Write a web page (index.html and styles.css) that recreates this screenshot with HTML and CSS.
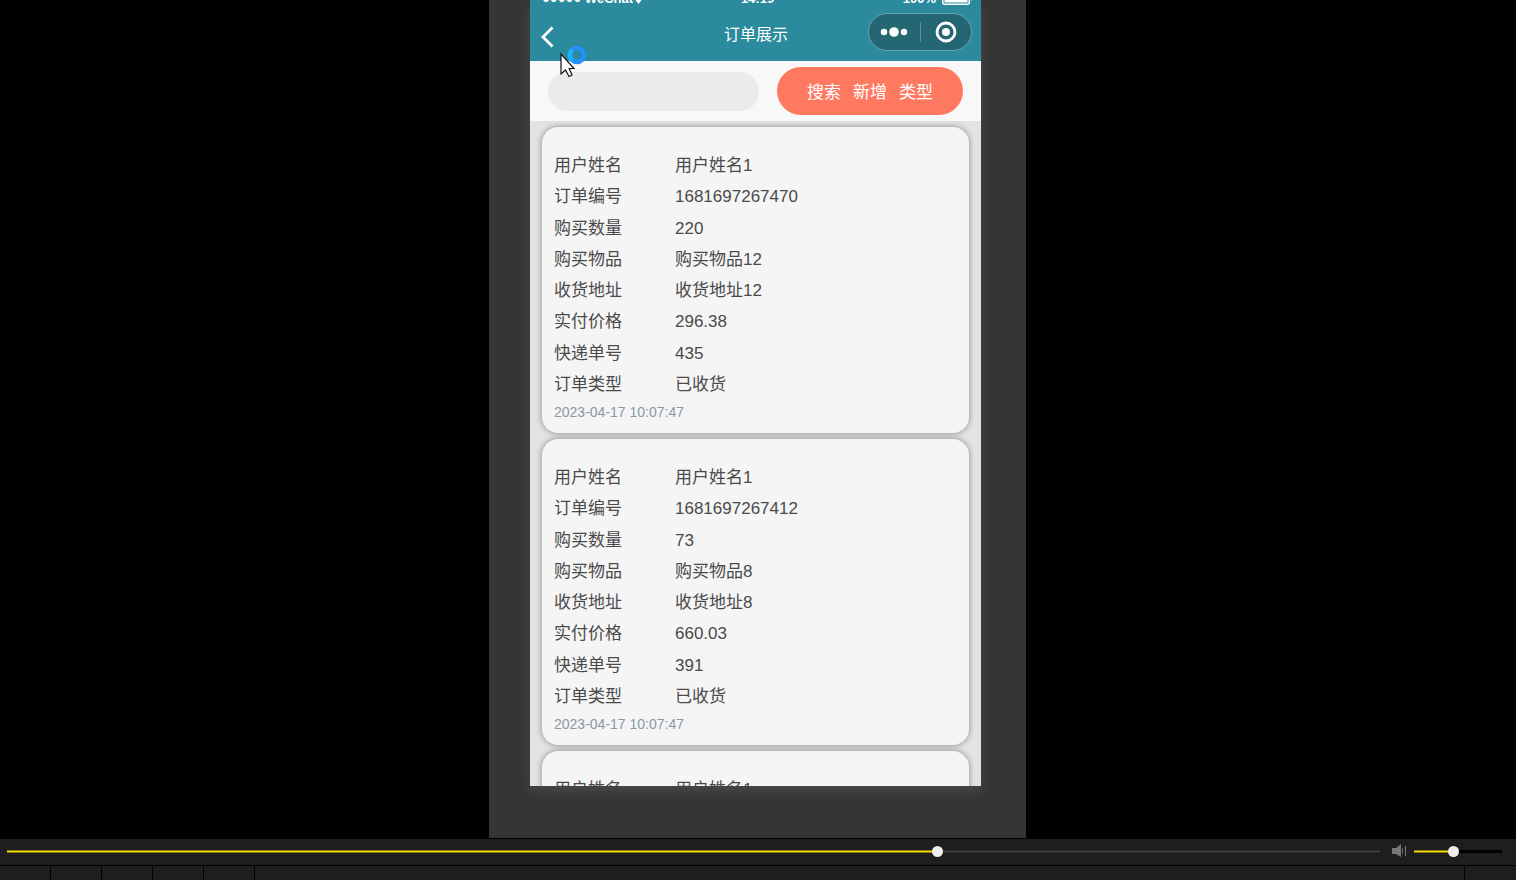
FILE: index.html
```
<!DOCTYPE html>
<html lang="zh-CN">
<head>
<meta charset="utf-8">
<title>订单展示</title>
<link rel="stylesheet" href="styles.css">
</head>
<body>
<main class="stage">
  <div class="frame">
    <div class="screen">
      <header class="header">
        <div class="status">
          <span class="status-side">●●●●● WeChat<svg width="9" height="9" viewBox="0 0 9 9"><path d="M0 3Q4.500 -1 9 3L4.500 9Z" fill="#fff"/></svg></span>
          <span>14:19</span>
          <span class="status-side status-right">100%<svg width="31" height="13" viewBox="0 0 31 13"><rect x=".75" y=".75" width="26.500" height="11.500" rx="2" fill="none" stroke="#fff" stroke-width="1.500"/><rect x="2.500" y="2.500" width="23" height="8" fill="#fff"/><path d="M29 4v5q3-2.500 0-5" fill="#fff"/></svg></span>
        </div>
        <div class="nav">
          <button class="back" aria-label="返回"><svg width="14" height="22" viewBox="0 0 14 22"><path d="M12.500 1.500L3 11L12.500 20.500" fill="none" stroke="#fff" stroke-width="2.800"/></svg></button>
          <h1 class="title">订单展示</h1>
          <div class="capsule">
            <button class="capsule-btn" aria-label="更多"><svg width="28" height="12" viewBox="0 0 28 12"><circle cx="4" cy="6" r="3.200" fill="#fff"/><circle cx="14" cy="6" r="4.800" fill="#fff"/><circle cx="24" cy="6" r="3.200" fill="#fff"/></svg></button>
            <button class="capsule-btn" aria-label="关闭"><svg width="22" height="22" viewBox="0 0 22 22"><circle cx="11" cy="11" r="9" fill="none" stroke="#fff" stroke-width="2.800"/><circle cx="11" cy="11" r="4" fill="#fff"/></svg></button>
          </div>
        </div>
      </header>
      <div class="search">
        <input class="search-input" type="text" aria-label="搜索订单">
        <div class="actions"><button>搜索</button><button>新增</button><button>类型</button></div>
      </div>
      <div class="list">
        <article class="card">
          <dl class="fields">
            <dt>用户姓名</dt><dd>用户姓名1</dd>
            <dt>订单编号</dt><dd>1681697267470</dd>
            <dt>购买数量</dt><dd>220</dd>
            <dt>购买物品</dt><dd>购买物品12</dd>
            <dt>收货地址</dt><dd>收货地址12</dd>
            <dt>实付价格</dt><dd>296.38</dd>
            <dt>快递单号</dt><dd>435</dd>
            <dt>订单类型</dt><dd>已收货</dd>
          </dl>
          <time class="time">2023-04-17 10:07:47</time>
        </article>
        <article class="card">
          <dl class="fields">
            <dt>用户姓名</dt><dd>用户姓名1</dd>
            <dt>订单编号</dt><dd>1681697267412</dd>
            <dt>购买数量</dt><dd>73</dd>
            <dt>购买物品</dt><dd>购买物品8</dd>
            <dt>收货地址</dt><dd>收货地址8</dd>
            <dt>实付价格</dt><dd>660.03</dd>
            <dt>快递单号</dt><dd>391</dd>
            <dt>订单类型</dt><dd>已收货</dd>
          </dl>
          <time class="time">2023-04-17 10:07:47</time>
        </article>
        <article class="card">
          <dl class="fields">
            <dt>用户姓名</dt><dd>用户姓名1</dd>
          </dl>
        </article>
      </div>
    </div>
    <svg class="cursor" width="30" height="34" viewBox="0 0 30 34"><circle cx="17" cy="9" r="7" fill="none" stroke="#2590fa" stroke-width="4.500"/><path d="M12 14A7 7 0 0 1 12 4" fill="none" stroke="#22b0fb" stroke-width="4.500"/><path d="M1 8V28L5.500 24L9 30.500L12 29L9.200 22.500H14Z" fill="#fff" stroke="#111" stroke-width="1.200"/></svg>
  </div>
</main>
<footer class="player">
  <div class="controls">
    <input class="range seek" type="range" min="0" max="1000" value="679" aria-label="播放进度">
    <svg class="speaker" width="16" height="14" viewBox="0 0 16 14"><path d="M0 4H4L9 0V13L4 10H0Z" fill="#777"/><path d="M10.500 4V10" stroke="#666"/><path d="M13.500 2V12" stroke="#777"/></svg>
    <input class="range volume" type="range" min="0" max="1000" value="440" aria-label="音量">
  </div>
  <div class="toolbar"><i></i><i></i><i></i><i></i><i></i><i></i><i></i></div>
</footer>
</body>
</html>
```
FILE: styles.css
```
* { box-sizing: border-box; }
body {
  margin: 0;
  height: 100vh;
  display: flex;
  flex-direction: column;
  overflow: hidden;
  background: #000;
  font-family: "Liberation Sans", "Noto Sans CJK SC", sans-serif;
}
button { border: 0; padding: 0; background: none; color: inherit; font: inherit; }
svg { display: block; }
.stage { flex: 1; min-height: 0; display: flex; justify-content: center; padding-right: 1px; }
.frame {
  position: relative;
  display: flex;
  width: 100%;
  max-width: 537px;
  padding: 0 45px 52px 41px;
  background: #353535;
}
.screen {
  flex: 1;
  display: flex;
  flex-direction: column;
  overflow: hidden;
  background: #e3e3e3;
  box-shadow: 0 6px 12px #484848;
}
.header { flex: none; background: #2b8a9e; color: #fff; }
.status {
  display: flex;
  align-items: flex-end;
  height: 6px;
  padding: 0 8px 0 12px;
  font-size: 13px;
  font-weight: 700;
  line-height: 14px;
}
.status-side { flex: 1; display: flex; align-items: flex-end; gap: 1px; white-space: nowrap; }
.status-side svg { margin-bottom: 2px; }
.status-right { justify-content: flex-end; gap: 6px; }
.status-right svg { margin-bottom: 1px; }
.nav {
  display: grid;
  grid-template-columns: 1fr auto 1fr;
  align-items: center;
  height: 55px;
  padding: 0 9px 0 10px;
}
.back { justify-self: start; margin-top: 6px; }
.title { margin: 0; padding-top: 2px; font-size: 16px; font-weight: 400; line-height: 24px; }
.capsule {
  justify-self: end;
  display: flex;
  align-items: center;
  width: 104px;
  height: 38px;
  margin-bottom: 3px;
  border: 1px solid #65a3af;
  border-radius: 19px;
  background: #246773;
}
.capsule-btn { flex: 1; display: flex; justify-content: center; align-items: center; height: 20px; }
.capsule-btn + .capsule-btn { border-left: 1px solid #5d929c; }
.search {
  flex: none;
  display: flex;
  align-items: center;
  gap: 18px;
  height: 60px;
  padding: 0 18px;
  background: #f8f8f8;
}
.search-input {
  flex: 1;
  min-width: 0;
  height: 39px;
  padding: 0 18px;
  border: 0;
  border-radius: 20px;
  background: #ebebeb;
  font-size: 16px;
}
.actions {
  display: flex;
  justify-content: center;
  align-items: center;
  gap: 12px;
  width: 186px;
  height: 48px;
  padding-bottom: 2px;
  border-radius: 24px;
  background: #ff7961;
  color: #fff;
  font-size: 17px;
}
.list { display: flex; flex-direction: column; gap: 6px; padding: 6px 12px; }
.card {
  flex: none;
  padding: 23px 12px 9px;
  border-radius: 16px;
  background: #f5f5f5;
  box-shadow: 0 0 6px #888;
}
.fields {
  display: grid;
  grid-template-columns: 121px 1fr;
  align-content: space-between;
  min-height: 250px;
  margin: 0;
  color: #4a4a4a;
  font-size: 17px;
  line-height: 31px;
}
.fields dt, .fields dd { height: 31px; margin: 0; }
.time { display: block; color: #8799a3; font-size: 14px; line-height: 24px; }
.cursor { position: absolute; left: 71px; top: 46px; }
.player { flex: none; padding-top: 1px; }
.controls {
  display: flex;
  align-items: center;
  height: 26px;
  padding: 0 14px 2px 7px;
  background: #1e1e1e;
}
.range { appearance: none; height: 14px; margin: 0; background: none; }
.seek { flex: 1; min-width: 0; }
.volume { width: 88px; }
.speaker { margin: 0 6px 0 12px; }
.range::-webkit-slider-runnable-track { height: 3px; }
.seek::-webkit-slider-runnable-track {
  background:
    linear-gradient(#857713 1px, #ffe100 1px 2px, #857713 2px) 0 0 / 68% 100% no-repeat,
    linear-gradient(#282828 1px, #484848 1px 2px, #282828 2px);
}
.volume::-webkit-slider-runnable-track {
  background:
    linear-gradient(#857713 1px, #ffe100 1px 2px, #857713 2px) 0 0 / 44% 100% no-repeat,
    #000;
}
.range::-webkit-slider-thumb {
  appearance: none;
  width: 11px;
  height: 11px;
  margin-top: -4px;
  border-radius: 50%;
  background: #eee;
}
.toolbar { display: flex; height: 15px; border-top: 1px solid #000; background: #1e1e1e; }
.toolbar i { flex: 0 0 51px; border-right: 1px solid #000; }
.toolbar i:nth-child(6) { flex: 1; }
.toolbar i:last-child { border-right: 0; }
```
